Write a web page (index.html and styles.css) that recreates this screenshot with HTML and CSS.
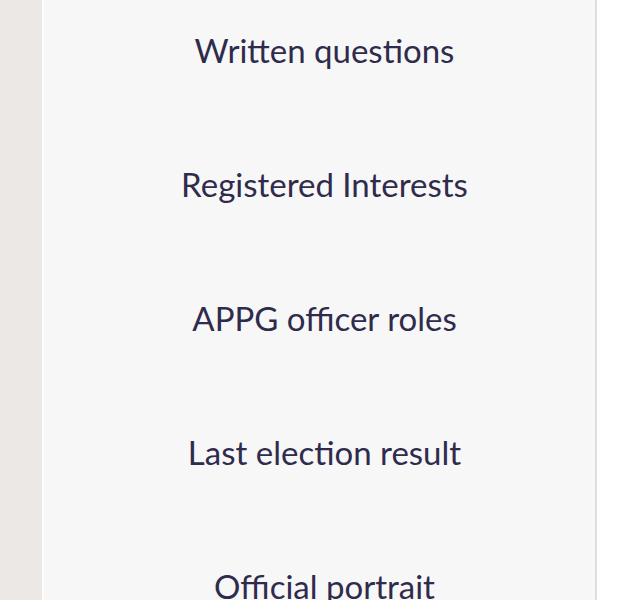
FILE: index.html
```html
<!DOCTYPE html>
<html lang="en">
<head>
  <meta charset="UTF-8" />
  <meta name="viewport" content="width=device-width, initial-scale=1.0" />
  <title>Member links</title>
  <link rel="stylesheet" href="styles.css">
</head>
<body>
  <div class="page">
    <div class="side"></div>
    <div class="panel">
      <ul class="link-list">
        <li><a href="#">Written questions</a></li>
        <li><a href="#">Registered Interests</a></li>
        <li><a href="#">APPG officer roles</a></li>
        <li><a href="#">Last election result</a></li>
        <li><a href="#">Official portrait</a></li>
      </ul>
    </div>
    <div class="gutter"></div>
  </div>
</body>
</html>
```

FILE: styles.css
```css
body {
  margin: 0;
  font-family: Lato, 'Noto Sans', sans-serif;
  background: #fff;
  color: #2f2b4c;
}
.page {
  display: flex;
  height: 100vh;
  overflow: hidden;
}
.side {
  width: 42px;
  flex-shrink: 0;
  background: #ece8e6;
}
.panel {
  width: 555px;
  flex-shrink: 0;
  background: #f7f7f7;
  border-left: 2px solid #fbfbfb;
  border-right: 2px solid #dedede;
  padding-left: 10px;
  box-sizing: border-box;
}
.gutter {
  flex: 1;
  background: #fff;
}
.link-list {
  list-style: none;
  margin: 0;
  padding: 0;
}
.link-list li {
  text-align: center;
  padding: 32px 0 66px;
  font-size: 33px;
  line-height: 36px;
}
.link-list a {
  color: #2f2b4c;
  text-decoration: none;
}
```
